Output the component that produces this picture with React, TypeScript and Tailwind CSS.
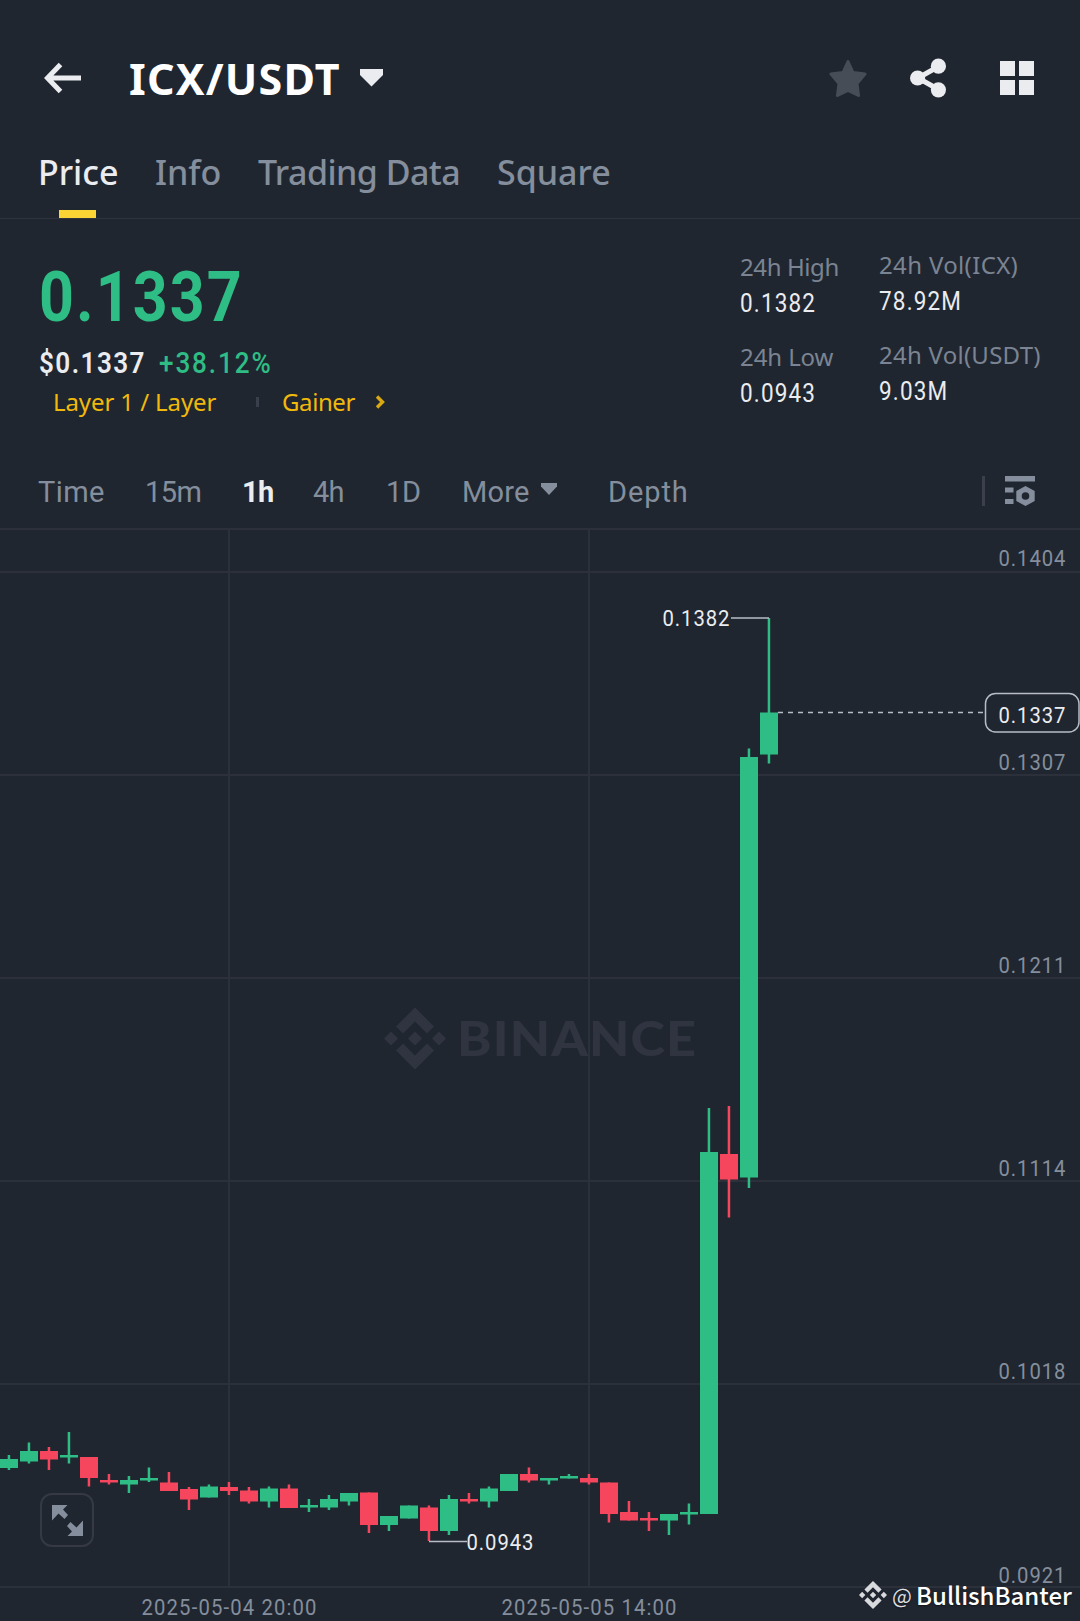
import { useState } from 'react'
import clsx from 'clsx'

const TABS = [
  { label: 'Price', className: 'w-[117px]' },
  { label: 'Info', className: 'w-[103px]' },
  { label: 'Trading Data', className: 'w-[239px] tracking-[-0.55px]' },
  { label: 'Square', className: 'w-[120px]' },
]

const INTERVALS = [
  { label: 'Time', className: 'w-[107px] tracking-[0.4px]' },
  { label: '15m', className: 'w-[97px] tracking-[-0.5px]' },
  { label: '1h', className: 'w-[71px] tracking-[-0.6px]' },
  { label: '4h', className: 'w-[73px] tracking-[-0.8px]' },
  { label: '1D', className: 'w-[76px] tracking-[-0.3px]' },
]

const STATS = [
  [
    { label: '24h High', value: '0.1382', labelClass: 'tracking-[-0.4px]' },
    { label: '24h Low', value: '0.0943', labelClass: 'tracking-[-0.1px]' },
  ],
  [
    { label: '24h Vol(ICX)', value: '78.92M', labelClass: 'tracking-[0.35px]' },
    { label: '24h Vol(USDT)', value: '9.03M', labelClass: 'tracking-[0.25px]' },
  ],
]

const PRICE_LEVELS = [
  { price: '0.1404', y: 572, labelY: 566 },
  { price: '0.1307', y: 775, labelY: 769.5 },
  { price: '0.1211', y: 978, labelY: 973 },
  { price: '0.1114', y: 1181, labelY: 1176 },
  { price: '0.1018', y: 1384, labelY: 1379 },
  { price: '0.0921', y: 1587, labelY: 1582.5 },
]

const TIMES = [
  { label: '2025-05-04 20:00', x: 229 },
  { label: '2025-05-05 14:00', x: 589 },
]

// [up, wick top, body top, body bottom, wick bottom]
type Candle = [boolean, number, number, number, number]

const CANDLES: Candle[] = [
  [true, 1455, 1459, 1468, 1470],
  [true, 1442.5, 1451, 1461.5, 1463.5],
  [false, 1447, 1451, 1459.5, 1470],
  [true, 1432, 1455, 1457.5, 1463.5],
  [false, 1457, 1457, 1478, 1486.5],
  [false, 1474, 1480, 1482.5, 1484.5],
  [true, 1476, 1480, 1484.5, 1493],
  [true, 1467.5, 1478, 1480.5, 1482],
  [false, 1472, 1482.5, 1491, 1491],
  [false, 1487, 1489, 1499.5, 1510],
  [true, 1484.5, 1486.5, 1497.5, 1497.5],
  [false, 1482, 1487, 1491, 1495],
  [false, 1487, 1490.5, 1501.5, 1503.5],
  [true, 1486.5, 1488.5, 1501.5, 1507.5],
  [false, 1484.5, 1488.5, 1508, 1508],
  [true, 1499, 1505, 1507.5, 1512],
  [true, 1495, 1499, 1507.5, 1510],
  [true, 1493, 1493, 1501.5, 1505.5],
  [false, 1492.5, 1492.5, 1525, 1533],
  [true, 1516, 1516, 1525, 1531],
  [true, 1505.5, 1505.5, 1518.5, 1518.5],
  [false, 1505.5, 1507.5, 1531, 1541],
  [true, 1495, 1499, 1531, 1535],
  [false, 1493, 1499, 1501.5, 1503.5],
  [true, 1486.5, 1488.5, 1501.5, 1507.5],
  [true, 1474, 1474, 1491, 1491],
  [false, 1467.5, 1474, 1480.5, 1482.5],
  [true, 1478, 1478, 1480.5, 1484.5],
  [true, 1474, 1476, 1478.5, 1478.5],
  [false, 1474, 1478, 1482.5, 1484.5],
  [false, 1482.5, 1482.5, 1514, 1522.5],
  [false, 1501, 1512, 1520.5, 1520.5],
  [false, 1512, 1518, 1520.5, 1531],
  [true, 1514, 1514, 1520.5, 1535],
  [true, 1503.5, 1512, 1514.5, 1524.5],
  [true, 1108, 1152, 1514, 1514],
  [false, 1106, 1154, 1179.5, 1217.5],
  [true, 748.5, 757, 1177.5, 1188],
  [true, 618, 712.5, 754.5, 763.5],
]

function BinanceMark({ className }: { className?: string }) {
  return (
    <svg viewBox="0 0 126.61 126.61" className={className} fill="currentColor">
      <path d="M38.73 53.2 63.3 28.63l24.58 24.58 14.3-14.3L63.3 0 24.43 38.9zM0 63.31l14.3-14.3 14.3 14.3-14.3 14.3zM38.73 73.41 63.3 97.98l24.58-24.59 14.31 14.29L63.3 126.61 24.43 87.7zM98 63.31l14.3-14.3 14.31 14.3-14.31 14.3zM77.83 63.3 63.3 48.78 48.77 63.3 63.3 77.83z" />
    </svg>
  )
}

function Header() {
  return (
    <header className="flex h-[156px] items-center">
      <svg viewBox="0 0 38 32" className="ml-[44px] h-8 w-[38px] shrink-0" fill="none" stroke="#eaecef" strokeWidth="5">
        <path d="M16.5 2.5 3.5 16l13 13.5M5 16h32" />
      </svg>
      <h1 className="ml-[47px] w-[231px] whitespace-nowrap pt-0.5 text-[43px] font-bold leading-[60px] tracking-[1.2px] text-white">ICX/USDT</h1>
      <svg viewBox="0 0 23 18" className="h-[18px] w-[23px] shrink-0" fill="#eaecef">
        <path d="M0 0h23v6L11.5 17.5 0 6z" />
      </svg>
      <div className="ml-[446px] flex items-center">
        <svg viewBox="0 0 38 40" className="h-10 w-[38px]" fill="#474d57" stroke="#474d57" strokeWidth="3" strokeLinejoin="round">
          <path d="M19 3.5 24 14.5l12 1.5-8 9.5 1.5 12-10.5-5-10.5 5 1.5-12L2 16l12-1.5z" />
        </svg>
        <svg viewBox="0 0 36 40" className="ml-[43px] h-10 w-9" fill="#eaecef" stroke="#eaecef">
          <path d="M28.5 8.5 8 20l20.5 11.5" fill="none" strokeWidth="5" />
          <circle cx="7.6" cy="20" r="7.6" stroke="none" />
          <circle cx="28.4" cy="8.2" r="7.6" stroke="none" />
          <circle cx="28.4" cy="31.8" r="7.6" stroke="none" />
        </svg>
        <div className="ml-[54px] grid h-[34px] w-[34px] grid-cols-2 gap-1">
          <span className="bg-[#eaecef]" />
          <span className="bg-[#eaecef]" />
          <span className="bg-[#eaecef]" />
          <span className="bg-[#eaecef]" />
        </div>
      </div>
    </header>
  )
}

function Tabs() {
  const [active, setActive] = useState('Price')
  return (
    <nav className="flex h-[63px] border-b border-[#2f343e] pl-[38px] text-[34px] font-medium leading-8">
      {TABS.map((tab) => (
        <button
          key={tab.label}
          type="button"
          onClick={() => setActive(tab.label)}
          className={clsx('flex flex-col items-start justify-between whitespace-nowrap text-left', tab.className, active === tab.label ? 'text-[#eaecef]' : 'text-[#848e9c]')}
        >
          {tab.label}
          {active === tab.label ? <span className="ml-[21px] h-2 w-[37px] bg-[#fcd535]" /> : null}
        </button>
      ))}
    </nav>
  )
}

function StatColumn({ stats, className }: { stats: typeof STATS[number]; className: string }) {
  return (
    <dl className={clsx('text-2xl leading-8', className)}>
      {stats.map((stat) => (
        <div key={stat.label} className="mb-[19px]">
          <dt className={clsx('whitespace-nowrap text-[#7b8492]', stat.labelClass)}>{stat.label}</dt>
          <dd className="mb-px mt-[3px] origin-left scale-x-90 font-[Roboto] text-[25px] font-[450] leading-9 tracking-[1.3px] text-[#eaecef]">{stat.value}</dd>
        </div>
      ))}
    </dl>
  )
}

function Ticker() {
  return (
    <section className="flex h-[235px]">
      <div className="w-[740px] pl-[39px] pt-[43px]">
        <p className="origin-left scale-x-[0.87] font-[Roboto] text-[70px] font-bold leading-[70px] tracking-[2.4px] text-[#2ebd85]">0.1337</p>
        <p className="mt-[13px] flex font-[Roboto] text-[29px] font-semibold leading-9">
          <span className="w-[120px] origin-left scale-x-90 tracking-[1.6px] text-[#eaecef]">$0.1337</span>
          <span className="origin-left scale-x-90 font-medium tracking-[2.1px] text-[#2ebd85]">+38.12%</span>
        </p>
        <div className="mt-[6px] flex items-center pl-[14px] text-2xl leading-[30px] text-[#f0b90b]">
          <span className="w-[203px] tracking-[-0.1px]">Layer 1 / Layer</span>
          <span className="h-[10px] w-[3px] bg-[#3a404b]" />
          <span className="ml-[23px] w-[93px] tracking-[-0.4px]">Gainer</span>
          <svg viewBox="0 0 11 14" className="h-[14px] w-[11px]" fill="none" stroke="#d9a913" strokeWidth="3.4">
            <path d="m2 1.5 5.5 5.5L2 12.5" />
          </svg>
        </div>
      </div>
      <StatColumn stats={STATS[0]} className="w-[139px] pt-[32px]" />
      <StatColumn stats={STATS[1]} className="pt-[30px]" />
    </section>
  )
}

function IntervalBar() {
  const [active, setActive] = useState('1h')
  return (
    <div className="flex h-[76px] items-center border-b-2 border-[#2b303b] pl-[38px] font-[Roboto] text-[29px] leading-9 text-[#848e9c]">
      {INTERVALS.map((item) => (
        <button
          key={item.label}
          type="button"
          onClick={() => setActive(item.label)}
          className={clsx('pt-[2px] text-left', item.className, active === item.label && 'font-bold text-[#eaecef]')}
        >
          {item.label}
        </button>
      ))}
      <button type="button" className="flex w-[146px] items-center gap-[11px] pt-[2px] tracking-[0.2px]">
        More
        <svg viewBox="0 0 16 12" className="-mt-[6px] h-3 w-4" fill="#848e9c">
          <path d="M0 0h16v3.5L8 12 0 3.5z" />
        </svg>
      </button>
      <button type="button" className="w-20 pt-[2px] text-left tracking-[0.9px]">Depth</button>
      <span className="ml-[294px] h-[30px] w-[3px] bg-[#3b3f4b]" />
      <svg viewBox="0 0 30 30" className="ml-[20px] h-[30px] w-[30px]" fill="#848e9c">
        <path d="M0 0h30v5.5H0zM0 11.5h8.5v5H0zM0 23h8.5v5H0z" />
        <path fillRule="evenodd" d="m20.5 10 9.2 5v10l-9.2 5-9.2-5V15zM20.5 16.2a3.8 3.8 0 1 0 0 7.6 3.8 3.8 0 0 0 0-7.6z" />
      </svg>
    </div>
  )
}

function ChartLabel({ x, y, width, children }: { x: number; y: number; width: number; children: string }) {
  return (
    <text transform={`translate(${x} ${y}) scale(0.9 1)`} textLength={width / 0.9}>{children}</text>
  )
}

function Chart() {
  return (
    <section className="relative h-[1091px]">
      <svg viewBox="0 530 1080 1091" className="block h-[1091px] w-[1080px] font-[Roboto]">
        <g stroke="#2b303b" strokeWidth="2">
          {PRICE_LEVELS.map((level) => (
            <path key={level.price} d={`M0 ${level.y}H1080`} />
          ))}
          {TIMES.map((time) => (
            <path key={time.label} d={`M${time.x} 530V1587`} />
          ))}
        </g>

        <text x="457" y="1055.5" textLength="240" lengthAdjust="spacingAndGlyphs" fill="#2f3440" className="font-[Lato] text-[47px] font-black tracking-[1px]">BINANCE</text>

        <g fill="#848e9c" className="text-[22.5px]">
          {PRICE_LEVELS.map((level) => (
            <ChartLabel key={level.price} x={998.5} y={level.labelY} width={67}>{level.price}</ChartLabel>
          ))}
          {TIMES.map((time) => (
            <ChartLabel key={time.label} x={time.x - 87.5} y={1615} width={175}>{time.label}</ChartLabel>
          ))}
        </g>

        {CANDLES.map(([up, high, top, bottom, low], i) => (
          <g key={i} fill={up ? '#2ebd85' : '#f6465d'}>
            <rect x={i * 20 + 7.7} y={high} width="2.5" height={low - high} />
            <rect x={i * 20} y={top} width="18" height={bottom - top} />
          </g>
        ))}

        <path d="M731 618h38M429 1541.5h38" stroke="#b7bdc6" strokeWidth="1.7" />
        <path d="M778 712.5h206" stroke="#b7bdc6" strokeWidth="1.6" strokeDasharray="5 5" />
        <rect x="985.5" y="693.5" width="93.5" height="38.5" rx="10" fill="#202630" stroke="#b7bdc6" strokeWidth="1.5" />
        <g fill="#eaecef" className="text-[22.5px]">
          <ChartLabel x={662.5} y={626} width={67}>0.1382</ChartLabel>
          <ChartLabel x={998.5} y={723} width={67}>0.1337</ChartLabel>
          <ChartLabel x={466.5} y={1550} width={67}>0.0943</ChartLabel>
        </g>
      </svg>

      <BinanceMark className="absolute left-[384px] top-[477px] h-[63px] w-[62px] text-[#2f3440]" />

      <button type="button" aria-label="Expand chart" className="absolute left-[40px] top-[963px] flex h-[54px] w-[54px] items-center justify-center rounded-xl border-2 border-[#343944]">
        <svg viewBox="0 0 31 31" className="h-[31px] w-[31px]" fill="#848e9c">
          <path d="M0 0h15.5L11 4.5l5 5.5-3.5 4-6-5.5-6.5 7zM31 31H15.5l4.5-4.5-5-5.5 3.5-4 6 5.5 6.5-7z" />
        </svg>
      </button>

      <div className="absolute left-[859px] top-[1047px] flex items-center font-['Noto_Sans_CJK_SC'] text-2xl font-medium leading-[36px] text-white [text-shadow:0_1px_2px_#00000080]">
        <BinanceMark className="h-7 w-7 text-[#d9dadd]" />
        <span className="ml-[5px] w-[24px] text-[21px] font-normal text-[#dddee0]">@</span>
        <span>BullishBanter</span>
      </div>
    </section>
  )
}

export default function App() {
  return (
    <main className="h-[1621px] w-[1080px] overflow-hidden bg-[#202630] font-['Noto_Sans',sans-serif]">
      <Header />
      <Tabs />
      <Ticker />
      <IntervalBar />
      <Chart />
    </main>
  )
}
